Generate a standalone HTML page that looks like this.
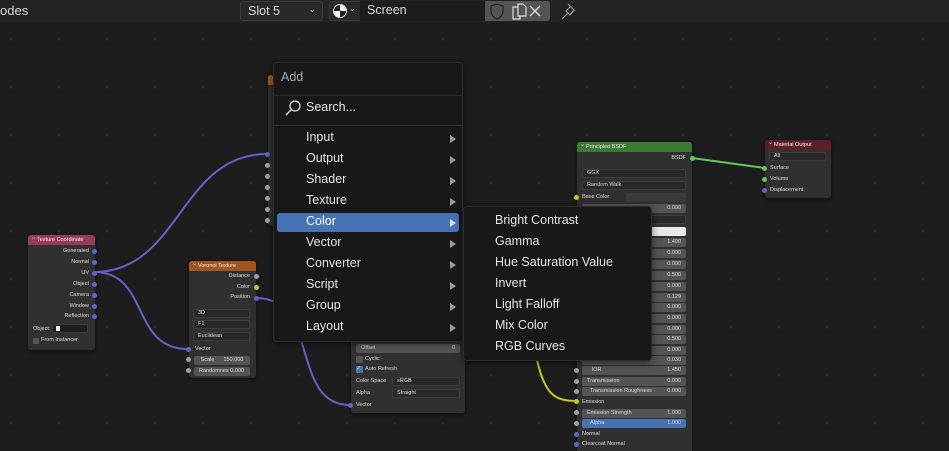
<!DOCTYPE html>
<html style="overflow:hidden;width:949px;height:451px"><head><meta charset="utf-8">
<style>
*{box-sizing:border-box;margin:0;padding:0}
body{width:949px;height:451px;overflow:hidden;background:#1d1d1d;font-family:"Liberation Sans","DejaVu Sans",sans-serif;position:relative;color:#ddd}
.a{position:absolute}
.grid{position:absolute;left:0;top:22px;width:949px;height:429px;
background-image:radial-gradient(circle,#2b2b2b 1.6px,transparent 1.8px);background-size:48px 48px;background-position:-13px -7px}
.hdr{position:absolute;left:0;top:0;width:949px;height:22px;background:#232323}
.node{position:absolute;background:#303030;border-radius:3px;box-shadow:0 1px 4px rgba(0,0,0,.6);font-size:5.5px;color:#ddd}
.nh{height:10px;border-radius:3px 3px 0 0;font-size:5.5px;line-height:10px;padding-left:9px;color:#eee;position:relative}
.nh:before{content:"⌄";position:absolute;left:3px;top:-2px;font-size:6px}
.t{position:absolute;font-size:5.5px;line-height:7px;color:#ddd;white-space:nowrap}
.r{text-align:right}
.s{position:absolute;width:5px;height:5px;border-radius:50%;background:#a1a1a1}
.pu{background:#6363c7}.ye{background:#c7c729}.gr{background:#63c763}
.f{position:absolute;height:9px;background:#545454;border-radius:2px;font-size:5.5px;line-height:9px;color:#ddd;padding:0 5px}
.dd{position:absolute;height:9px;background:#282828;border:1px solid #3d3d3d;border-radius:2px;font-size:5.5px;line-height:7px;color:#ddd;padding:0 4px}
.menu{position:absolute;background:#181818;border:1px solid #2c2c2c;border-radius:4px;box-shadow:0 2px 8px rgba(0,0,0,.5)}
.mi{position:absolute;font-size:12.5px;color:#e6e6e6;white-space:nowrap}
.ar{position:absolute;left:176px;width:0;height:0;border-left:6px solid #9a9a9a;border-top:4px solid transparent;border-bottom:4px solid transparent}
</style></head><body>
<div class="grid"></div>
<div class="hdr"></div>
<div class="a" style="left:0;top:3px;font-size:13px;color:#d8d8d8">odes</div>
<div class="a" style="left:240px;top:1px;width:83px;height:20px;background:#282828;border:1px solid #3a3a3a;border-radius:3px;font-size:12.5px;color:#ddd;padding:2px 7px">Slot 5<span class="a" style="right:6px;top:2px;font-size:9px">⌄</span></div>
<div class="a" style="left:329px;top:1px;width:157px;height:20px;background:#282828;border:1px solid #3a3a3a;border-radius:3px"></div>
<div class="a" style="left:333px;top:4px;width:14px;height:14px;border-radius:50%;background:conic-gradient(#eee 0 25%,#222 25% 50%,#eee 50% 75%,#222 75%);border:1.5px solid #ddd"></div>
<div class="a" style="left:349px;top:4px;font-size:8px;color:#ccc">⌄</div>
<div class="a" style="left:360px;top:1px;width:126px;height:20px;background:#1d1d1d;font-size:12.5px;color:#ddd;padding:2px 7px">Screen</div>
<div class="a" style="left:485px;top:1px;width:65px;height:20px;background:#545454;border-radius:0 3px 3px 0"></div>
<svg class="a" style="left:485px;top:1px" width="95" height="20">
<path d="M6 5 L12 3 L18 5 L18 11 Q17 16 12 18 Q7 16 6 11Z" fill="none" stroke="#222" stroke-width="1.2"/>
<path d="M28 6 H33 V3 H38 L41 6 V15 H35 V18 H28Z M33 6 V15 H35" fill="none" stroke="#ddd" stroke-width="1.2"/>
<line x1="45" y1="5" x2="55" y2="15" stroke="#ddd" stroke-width="1.3"/><line x1="55" y1="5" x2="45" y2="15" stroke="#ddd" stroke-width="1.3"/>
<path d="M83 3 L90 10 M86 5 L81 10 L85 14 L89 9 M83 12 L77 18" fill="none" stroke="#999" stroke-width="1.2"/>
</svg>

<svg class="a" style="left:0;top:0" width="949" height="451">
<path d="M94 272 C180 272 180 154 267 154" fill="none" stroke="#6363c7" stroke-width="2"/>
<path d="M94 272 C150 272 130 349 188 349" fill="none" stroke="#6363c7" stroke-width="2"/>
<path d="M256 298 C320 298 290 405 350 405" fill="none" stroke="#6363c7" stroke-width="2"/>
<path d="M692 158 L765 168" stroke="#63c763" stroke-width="2"/>
<path d="M537 360 C545 395 555 401 577 401" fill="none" stroke="#c7c729" stroke-width="2"/>
</svg>

<div class="node" style="left:268px;top:75px;width:60px;height:151px"><div class="nh" style="background:#a0561e;width:5px;padding:0"></div></div>
<div class="s pu" style="left:265px;top:152px"></div>
<div class="s" style="left:265px;top:163px"></div><div class="s" style="left:265px;top:174px"></div><div class="s" style="left:265px;top:185px"></div><div class="s" style="left:265px;top:196px"></div><div class="s" style="left:265px;top:207px"></div><div class="s" style="left:265px;top:218px"></div>

<div class="node" style="left:28px;top:235px;width:67px;height:115px">
<div class="nh" style="background:#973b5a">Texture Coordinate</div>
<div class="t r" style="right:6px;top:13px">Generated</div>
<div class="t r" style="right:6px;top:24px">Normal</div>
<div class="t r" style="right:6px;top:35px">UV</div>
<div class="t r" style="right:6px;top:46px">Object</div>
<div class="t r" style="right:6px;top:57px">Camera</div>
<div class="t r" style="right:6px;top:68px">Window</div>
<div class="t r" style="right:6px;top:78px">Reflection</div>
<div class="t" style="left:5px;top:91px">Object:</div>
<div class="dd" style="left:24px;top:89px;width:36px;background:#1d1d1d"></div>
<div class="a" style="left:28px;top:91px;width:4px;height:5px;background:#eee"></div>
<div class="a" style="left:5px;top:103px;width:6px;height:6px;background:#555;border-radius:1px"></div>
<div class="t" style="left:13px;top:102px">From Instancer</div>
</div>
<div class="s pu" style="left:92px;top:249px"></div><div class="s pu" style="left:92px;top:260px"></div><div class="s pu" style="left:92px;top:271px"></div><div class="s pu" style="left:92px;top:282px"></div><div class="s pu" style="left:92px;top:293px"></div><div class="s pu" style="left:92px;top:304px"></div><div class="s pu" style="left:92px;top:314px"></div>

<div class="node" style="left:189px;top:261px;width:67px;height:117px">
<div class="nh" style="background:#a0561e">Voronoi Texture</div>
<div class="t r" style="right:6px;top:12px">Distance</div>
<div class="t r" style="right:6px;top:23px">Color</div>
<div class="t r" style="right:6px;top:33px">Position</div>
<div class="dd" style="left:4px;top:48px;width:57px">3D</div>
<div class="dd" style="left:4px;top:59px;width:57px">F1</div>
<div class="dd" style="left:4px;top:71px;width:57px">Euclidean</div>
<div class="t" style="left:6px;top:85px">Vector</div>
<div class="f" style="left:5px;top:95px;width:56px">&nbsp;Scale&nbsp;&nbsp;&nbsp;&nbsp;&nbsp;&nbsp;150.000</div>
<div class="f" style="left:5px;top:106px;width:56px">Randomnes 0.000</div>
</div>
<div class="s" style="left:254px;top:274px"></div><div class="s ye" style="left:254px;top:285px"></div><div class="s pu" style="left:254px;top:296px"></div>
<div class="s pu" style="left:186px;top:347px"></div><div class="s" style="left:186px;top:357px"></div><div class="s" style="left:186px;top:368px"></div>

<div class="node" style="left:351px;top:330px;width:114px;height:83px">
<div class="f" style="left:5px;top:14px;width:104px">Offset<span class="a" style="right:5px">0</span></div>
<div class="a" style="left:5px;top:26px;width:7px;height:7px;background:#555;border-radius:1px"></div>
<div class="t" style="left:14px;top:26px">Cyclic</div>
<div class="a" style="left:5px;top:36px;width:7px;height:7px;background:#4772b3;border-radius:1px;color:#fff;font-size:6px;line-height:7px">✓</div>
<div class="t" style="left:14px;top:36px">Auto Refresh</div>
<div class="t" style="left:5px;top:48px">Color Space</div>
<div class="dd" style="left:41px;top:47px;width:68px">sRGB</div>
<div class="t" style="left:5px;top:60px">Alpha</div>
<div class="dd" style="left:41px;top:59px;width:68px">Straight</div>
<div class="t" style="left:5px;top:72px">Vector</div>
</div>
<div class="s pu" style="left:348px;top:403px"></div>

<div class="node" style="left:577px;top:142px;width:115px;height:309px;border-radius:3px 3px 0 0">
<div class="nh" style="background:#3b7a35">Principled BSDF</div>
<div class="t r" style="right:6px;top:13px">BSDF</div>
<div class="dd" style="left:5px;top:27px;width:104px">GGX</div>
<div class="dd" style="left:5px;top:39px;width:104px">Random Walk</div>
<div class="t" style="left:5px;top:52px">Base Color</div>
<div class="f" style="left:49px;top:51px;width:60px;background:#3a3a3a"></div>
<div class="f" style="left:5px;top:62px;width:104px"><span class="a" style="right:5px">0.000</span></div>
<div class="dd" style="left:5px;top:73px;width:104px"></div>
<div class="f" style="left:5px;top:85px;width:104px;background:#e8e8e8"></div>
<div class="f" style="left:5px;top:96px;width:104px"><span class="a" style="right:5px">1.400</span></div>
<div class="f" style="left:5px;top:107px;width:104px"><span class="a" style="right:5px">0.000</span></div>
<div class="f" style="left:5px;top:118px;width:104px"><span class="a" style="right:5px">0.000</span></div>
<div class="f" style="left:5px;top:129px;width:104px"><span class="a" style="right:5px">0.500</span></div>
<div class="f" style="left:5px;top:140px;width:104px"><span class="a" style="right:5px">0.000</span></div>
<div class="f" style="left:5px;top:151px;width:104px"><span class="a" style="right:5px">0.129</span></div>
<div class="f" style="left:5px;top:161px;width:104px"><span class="a" style="right:5px">0.000</span></div>
<div class="f" style="left:5px;top:172px;width:104px"><span class="a" style="right:5px">0.000</span></div>
<div class="f" style="left:5px;top:183px;width:104px"><span class="a" style="right:5px">0.000</span></div>
<div class="f" style="left:5px;top:193px;width:104px"><span class="a" style="right:5px">0.500</span></div>
<div class="f" style="left:5px;top:204px;width:104px"><span class="a" style="right:5px">0.000</span></div>
<div class="f" style="left:5px;top:214px;width:104px"><span class="a" style="right:5px">0.030</span></div>
<div class="f" style="left:5px;top:224px;width:104px">&nbsp;&nbsp;&nbsp;IOR<span class="a" style="right:5px">1.450</span></div>
<div class="f" style="left:5px;top:235px;width:104px">Transmission<span class="a" style="right:5px">0.000</span></div>
<div class="f" style="left:5px;top:245px;width:104px">&nbsp;&nbsp;Transmission Roughness<span class="a" style="right:5px">0.000</span></div>
<div class="t" style="left:5px;top:257px">Emission</div>
<div class="f" style="left:5px;top:267px;width:104px">Emission Strength<span class="a" style="right:5px">1.000</span></div>
<div class="f" style="left:5px;top:277px;width:104px;background:#4772b3">&nbsp;&nbsp;Alpha<span class="a" style="right:5px">1.000</span></div>
<div class="t" style="left:5px;top:289px">Normal</div>
<div class="t" style="left:5px;top:299px">Clearcoat Normal</div>
</div>
<div class="s gr" style="left:690px;top:156px"></div>
<div class="s ye" style="left:574px;top:195px"></div>
<div class="s" style="left:574px;top:368px"></div><div class="s" style="left:574px;top:379px"></div><div class="s" style="left:574px;top:389px"></div>
<div class="s ye" style="left:574px;top:399px"></div>
<div class="s" style="left:574px;top:410px"></div><div class="s" style="left:574px;top:421px"></div>
<div class="s pu" style="left:574px;top:432px"></div><div class="s pu" style="left:574px;top:442px"></div>

<div class="node" style="left:765px;top:140px;width:66px;height:58px">
<div class="nh" style="background:#5a1f28">Material Output</div>
<div class="dd" style="left:4px;top:12px;width:57px">All</div>
<div class="t" style="left:5px;top:25px">Surface</div>
<div class="t" style="left:5px;top:36px">Volume</div>
<div class="t" style="left:5px;top:47px">Displacement</div>
</div>
<div class="s gr" style="left:762px;top:166px"></div><div class="s gr" style="left:762px;top:177px"></div><div class="s pu" style="left:762px;top:188px"></div>

<div class="menu" style="left:273px;top:62px;width:190px;height:280px">
<div class="mi" style="left:7px;top:7px;color:#a8a8a8">Add</div>
<div class="a" style="left:0;top:32px;width:188px;height:1px;background:#2e2e2e"></div>
<svg class="a" style="left:10px;top:36px" width="18" height="18"><circle cx="11" cy="7" r="5" fill="none" stroke="#ddd" stroke-width="1.3"/><line x1="7.5" y1="10.5" x2="2" y2="16" stroke="#ddd" stroke-width="1.4"/></svg>
<div class="mi" style="left:32px;top:37px">Search...</div>
<div class="a" style="left:0;top:62px;width:188px;height:1px;background:#2e2e2e"></div>
<div class="a" style="left:3px;top:150px;width:182px;height:19px;background:#4772b3;border-radius:3px"></div>
<div class="mi" style="left:32px;top:67px">Input</div><div class="ar" style="top:72px"></div>
<div class="mi" style="left:32px;top:88px">Output</div><div class="ar" style="top:93px"></div>
<div class="mi" style="left:32px;top:109px">Shader</div><div class="ar" style="top:114px"></div>
<div class="mi" style="left:32px;top:130px">Texture</div><div class="ar" style="top:135px"></div>
<div class="mi" style="left:32px;top:151px;color:#fff">Color</div><div class="ar" style="top:156px;border-left-color:#ddd"></div>
<div class="mi" style="left:32px;top:172px">Vector</div><div class="ar" style="top:177px"></div>
<div class="mi" style="left:32px;top:193px">Converter</div><div class="ar" style="top:198px"></div>
<div class="mi" style="left:32px;top:214px">Script</div><div class="ar" style="top:219px"></div>
<div class="mi" style="left:32px;top:235px">Group</div><div class="ar" style="top:240px"></div>
<div class="mi" style="left:32px;top:256px">Layout</div><div class="ar" style="top:261px"></div>
</div>

<div class="menu" style="left:463px;top:206px;width:189px;height:155px">
<div class="mi" style="left:31px;top:6px">Bright Contrast</div>
<div class="mi" style="left:31px;top:27px">Gamma</div>
<div class="mi" style="left:31px;top:48px">Hue Saturation Value</div>
<div class="mi" style="left:31px;top:69px">Invert</div>
<div class="mi" style="left:31px;top:90px">Light Falloff</div>
<div class="mi" style="left:31px;top:111px">Mix Color</div>
<div class="mi" style="left:31px;top:132px">RGB Curves</div>
</div>
</body></html>
